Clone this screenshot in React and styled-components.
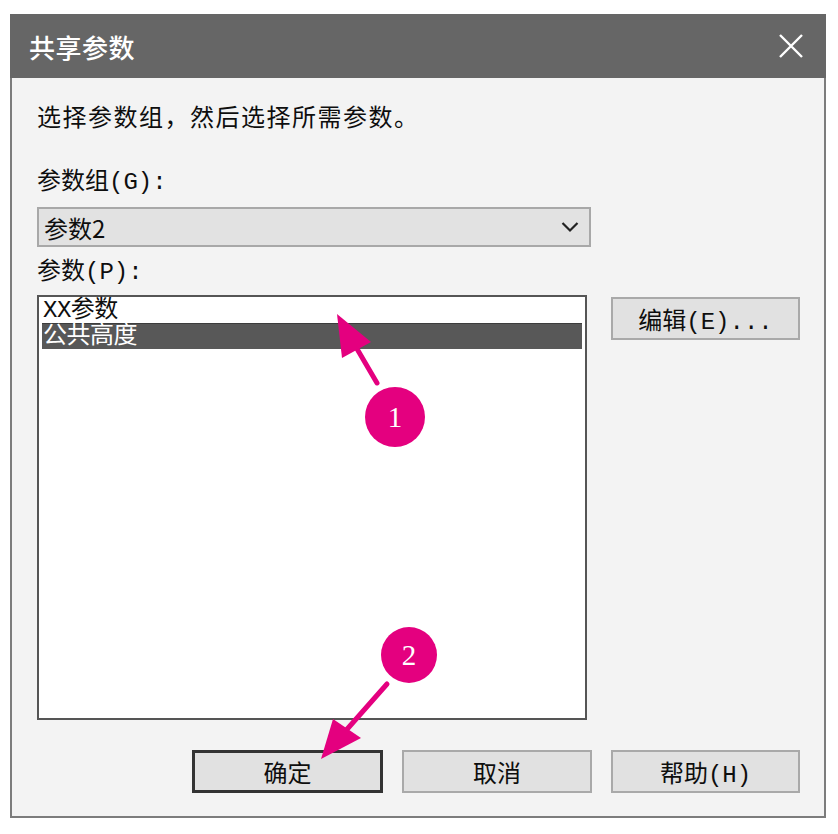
import { createGlobalStyle, styled } from "styled-components";

const GlobalStyle = createGlobalStyle`
    html, body {
        margin: 0;
        padding: 0;
        background: #ffffff;
    }
    body {
        font-family: "Liberation Mono", "Noto Sans CJK SC", monospace;
    }
`;

const Page = styled.div`
    position: relative;
    width: 838px;
    height: 834px;
    padding: 14px 0 0 10px;
    box-sizing: border-box;
`;

const Dialog = styled.section`
    width: 816px;
    height: 804px;
    display: flex;
    flex-direction: column;
`;

const TitleBar = styled.header`
    height: 64px;
    flex-shrink: 0;
    background: #666666;
    display: flex;
    align-items: center;
    justify-content: space-between;
    padding: 0 22px 0 19px;
    color: #ffffff;
    font-family: "Noto Sans CJK SC", sans-serif;
    font-size: 26px;
    font-weight: 500;
    letter-spacing: 0.5px;
`;

const Body = styled.div`
    flex: 1;
    background: #f3f3f3;
    border: 2px solid #7c7c7c;
    border-top: none;
    padding: 26px 24px 23px 25px;
    display: flex;
    flex-direction: column;
    color: #0e0e0e;
    font-size: 24px;
`;

const Text = styled.div`
    line-height: 32px;
    height: 32px;
    margin-top: ${ (p) => p.$top || 0 }px;
    letter-spacing: ${ (p) => p.$spacing || 0 }px;
    white-space: nowrap;
`;

const Select = styled.div`
    margin-top: 8px;
    width: 554px;
    height: 40px;
    box-sizing: border-box;
    background: #e2e2e2;
    border: 2px solid #a8a8a8;
    display: flex;
    align-items: center;
    justify-content: space-between;
    padding: 0 10px 0 5px;
    font-family: "Noto Sans CJK SC", sans-serif;
`;

const ListRow = styled.div`
    margin-top: 6px;
    display: flex;
    gap: 24px;
    align-items: flex-start;
`;

const ListBox = styled.div`
    width: 550px;
    height: 425px;
    box-sizing: border-box;
    background: #ffffff;
    border: 2px solid #555555;
    padding: 1px 3px;
    display: flex;
    flex-direction: column;
`;

const ListItem = styled.div`
    height: 25px;
    line-height: 25px;
    font-size: 24px;
    padding-left: 1px;
    background: ${ (p) => p.$selected ? "#585858" : "transparent" };
    color: ${ (p) => p.$selected ? "#ffffff" : "#0e0e0e" };
    border-top: ${ (p) => p.$selected ? "1px solid #3c3c3c" : "none" };
    white-space: nowrap;
    letter-spacing: -0.5px;
`;

const Button = styled.button`
    width: ${ (p) => p.$w || 189 }px;
    height: 43px;
    margin-top: 2px;
    box-sizing: border-box;
    background: #e1e1e1;
    border: ${ (p) => p.$default ? "3px solid #333333" : "2px solid #a9a9a9" };
    font-family: "Liberation Mono", "Noto Sans CJK SC", monospace;
    font-size: 24px;
    color: #0e0e0e;
    padding: 0;
    display: flex;
    align-items: center;
    justify-content: center;
`;

const Footer = styled.div`
    margin-top: 28px;
    display: flex;
    justify-content: flex-end;
    gap: 19px;
`;

const Overlay = styled.svg`
    position: absolute;
    left: 0;
    top: 0;
    pointer-events: none;
`;

function CloseIcon() {
    return (
        <svg width="26" height="26" viewBox="0 0 26 26">
            <path d="M2 2 L24 24 M24 2 L2 24" stroke="#ffffff" strokeWidth="2.4" />
        </svg>
    );
}

function Chevron() {
    return (
        <svg width="18" height="12" viewBox="0 0 18 12">
            <path d="M1.5 2 L9 9.5 L16.5 2" fill="none" stroke="#222" strokeWidth="2.2" />
        </svg>
    );
}

function Badge({ cx, cy, r, label }) {
    return (
        <g>
            <circle cx={ cx } cy={ cy } r={ r } fill="#e4007f" />
            <text x={ cx } y={ cy + 10 } textAnchor="middle" fill="#ffffff"
                fontFamily="Liberation Serif, serif" fontSize="29">{ label }</text>
        </g>
    );
}

function App() {
    return (
        <Page>
            <GlobalStyle />
            <Dialog>
                <TitleBar>
                    <span>共享参数</span>
                    <CloseIcon />
                </TitleBar>
                <Body>
                    <Text $spacing={ 1.5 }>选择参数组，然后选择所需参数。</Text>
                    <Text $top={ 31 }>参数组(G):</Text>
                    <Select>
                        <span>参数2</span>
                        <Chevron />
                    </Select>
                    <Text $top={ 10 }>参数(P):</Text>
                    <ListRow>
                        <ListBox>
                            <ListItem>XX参数</ListItem>
                            <ListItem $selected>公共高度</ListItem>
                        </ListBox>
                        <Button $w={ 189 }>编辑(E)...</Button>
                    </ListRow>
                    <Footer>
                        <Button $w={ 191 } $default>确定</Button>
                        <Button $w={ 190 }>取消</Button>
                        <Button $w={ 189 }>帮助(H)</Button>
                    </Footer>
                </Body>
            </Dialog>

            <Overlay width="838" height="834" viewBox="0 0 838 834">
                <g stroke="#e4007f" strokeWidth="5" strokeLinecap="round">
                    <line x1="377" y1="383" x2="346" y2="330" />
                    <line x1="387" y1="684" x2="334" y2="744" />
                </g>
                <polygon points="337,314 371,342 342,358" fill="#e4007f" />
                <polygon points="321,759 333,719 361,738" fill="#e4007f" />
                <Badge cx={ 395 } cy={ 417 } r={ 30 } label="1" />
                <Badge cx={ 409 } cy={ 655 } r={ 28 } label="2" />
            </Overlay>
        </Page>
    );
}

export default App;
